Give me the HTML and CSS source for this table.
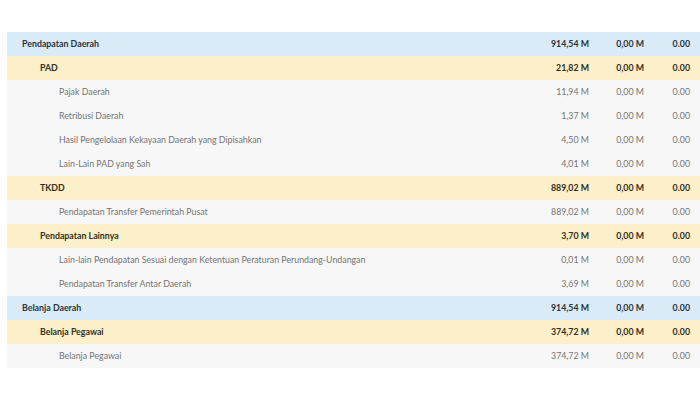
FILE: index.html
```html
<!DOCTYPE html>
<html>
<head>
<meta charset="utf-8">
<link rel="stylesheet" href="styles.css">
</head>
<body>
<div class="wrap">
<table class="tbl">
<colgroup><col><col class="c2"><col class="c3"><col class="c4"></colgroup>
<tbody>
<tr class="l1"><td class="name">Pendapatan Daerah</td><td>914,54 M</td><td>0,00 M</td><td>0.00</td></tr>
<tr class="l2"><td class="name">PAD</td><td>21,82 M</td><td>0,00 M</td><td>0.00</td></tr>
<tr class="l3"><td class="name">Pajak Daerah</td><td>11,94 M</td><td>0,00 M</td><td>0.00</td></tr>
<tr class="l3"><td class="name">Retribusi Daerah</td><td>1,37 M</td><td>0,00 M</td><td>0.00</td></tr>
<tr class="l3"><td class="name">Hasil Pengelolaan Kekayaan Daerah yang Dipisahkan</td><td>4,50 M</td><td>0,00 M</td><td>0.00</td></tr>
<tr class="l3"><td class="name">Lain-Lain PAD yang Sah</td><td>4,01 M</td><td>0,00 M</td><td>0.00</td></tr>
<tr class="l2"><td class="name">TKDD</td><td>889,02 M</td><td>0,00 M</td><td>0.00</td></tr>
<tr class="l3"><td class="name">Pendapatan Transfer Pemerintah Pusat</td><td>889,02 M</td><td>0,00 M</td><td>0.00</td></tr>
<tr class="l2"><td class="name">Pendapatan Lainnya</td><td>3,70 M</td><td>0,00 M</td><td>0.00</td></tr>
<tr class="l3"><td class="name">Lain-lain Pendapatan Sesuai dengan Ketentuan Peraturan Perundang-Undangan</td><td>0,01 M</td><td>0,00 M</td><td>0.00</td></tr>
<tr class="l3"><td class="name">Pendapatan Transfer Antar Daerah</td><td>3,69 M</td><td>0,00 M</td><td>0.00</td></tr>
<tr class="l1"><td class="name">Belanja Daerah</td><td>914,54 M</td><td>0,00 M</td><td>0.00</td></tr>
<tr class="l2"><td class="name">Belanja Pegawai</td><td>374,72 M</td><td>0,00 M</td><td>0.00</td></tr>
<tr class="l3"><td class="name">Belanja Pegawai</td><td>374,72 M</td><td>0,00 M</td><td>0.00</td></tr>
</tbody>
</table>
</div>
</body>
</html>
```

FILE: styles.css
```css
html, body {
  margin: 0;
  padding: 0;
  background: #fff;
}
body {
  font-family: Lato, "Open Sans", sans-serif;
  font-size: 8.8px;
}
.wrap {
  padding: 32px 0 0 7px;
}
.tbl {
  width: 693px;
  border-collapse: collapse;
  table-layout: fixed;
}
.c2 { width: 120px; }
.c3 { width: 55px; }
.c4 { width: 56px; }
.tbl td {
  height: 23px;
  padding: 0 0 1px 0;
  text-align: right;
  white-space: nowrap;
  vertical-align: middle;
}
.tbl td:last-child { padding-right: 10px; }
.tbl td.name { text-align: left; }
.l1 td { background: #d9ebf6; color: #2c343b; font-weight: 700; }
.l1 td.name { padding-left: 15px; }
.l2 td { background: #fbf0c9; color: #352f20; font-weight: 700; }
.l2 td.name { padding-left: 33px; }
.l3 td { background: #f7f7f7; color: #747474; }
.l3 td.name { padding-left: 52px; }
```
